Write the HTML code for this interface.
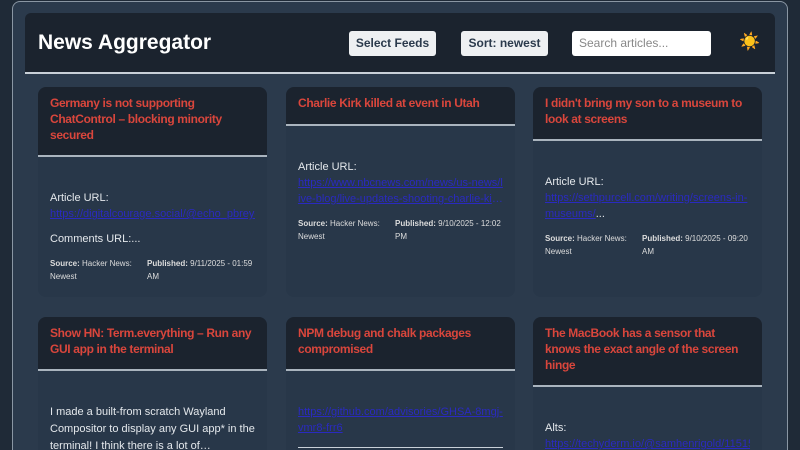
<!DOCTYPE html>
<html><head><meta charset="utf-8"><style>
*{box-sizing:border-box;margin:0;padding:0}
html,body{width:800px;height:450px;overflow:hidden}
body{background:#1f2a37;font-family:"Liberation Sans",sans-serif;position:relative}
.wrap{position:absolute;left:12px;top:1px;width:776px;height:449px;background:#2b3a4c;border:1px solid #8a96a3;border-bottom:none;border-radius:8px 8px 0 0}
.hdr{position:absolute;left:25px;top:13px;width:750px;height:61px;background:#1b232e;border-bottom:2px solid #c9d0d8;border-radius:6px 6px 0 0}
.hdr h1{position:absolute;left:13px;top:18px;color:#fff;font-size:21px;font-weight:bold}
.btn{position:absolute;top:18px;height:25px;background:#eef0f2;border-radius:3px;font-size:12px;font-weight:bold;color:#2b3a4c;text-align:center;line-height:25px}
.search{position:absolute;left:547px;top:18px;width:139px;height:25px;background:#fff;border-radius:3px;font-size:12px;color:#888;padding-left:7px;line-height:25px}
.sun{position:absolute;left:714px;top:19px;font-size:17px}
.card{position:absolute;width:229px;background:#283749;border-radius:8px 8px 0 0;overflow:hidden}
.ch{background:#1b232e;border-bottom:2px solid #aab4be;padding:8px 12px;color:#d9463c;font-size:12px;font-weight:bold;line-height:16px;letter-spacing:-0.35px}
.cb{padding:0 12px;color:#e4e8ec;font-size:11px;line-height:16px}
.cb a{color:#2a2ac0;text-decoration:underline;word-break:break-all}
.one{display:block;white-space:nowrap;overflow:hidden}
.two{display:-webkit-box;-webkit-line-clamp:2;-webkit-box-orient:vertical;overflow:hidden}
.meta{display:flex;font-size:8px;line-height:13px;margin-top:10px;color:#ddd}
.meta div:first-child{width:97px}
.meta div:last-child{flex:1}
</style></head><body>
<div class="wrap"></div>
<div class="hdr"><h1>News Aggregator</h1>
<div class="btn" style="left:324px;width:87px">Select Feeds</div>
<div class="btn" style="left:436px;width:87px">Sort: newest</div>
<div class="search">Search articles...</div>
<div class="sun">☀️</div></div>

<div class="card" style="left:38px;top:87px;height:210px;border-radius:8px"><div class="ch" style="height:70px">Germany is not supporting ChatControl – blocking minority secured</div>
<div class="cb"><div style="height:33px"></div>Article URL:<br><a class="one">https://digitalcourage.social/@echo_pbreyer/1</a><div style="margin-top:9px">Comments URL:...</div>
<div class="meta"><div><b>Source:</b> Hacker News: Newest</div><div><b>Published:</b> 9/11/2025 - 01:59 AM</div></div></div></div>

<div class="card" style="left:286px;top:87px;height:210px;border-radius:8px"><div class="ch" style="height:39px">Charlie Kirk killed at event in Utah</div>
<div class="cb"><div style="height:33px"></div>Article URL:<br><a class="two">https://www.nbcnews.com/news/us-news/live-blog/live-updates-shooting-charlie-kirk-event-utah</a>
<div class="meta"><div><b>Source:</b> Hacker News: Newest</div><div><b>Published:</b> 9/10/2025 - 12:02 PM</div></div></div></div>

<div class="card" style="left:533px;top:87px;height:210px;border-radius:8px"><div class="ch" style="height:54px">I didn't bring my son to a museum to look at screens</div>
<div class="cb"><div style="height:33px"></div>Article URL:<br><a>https://sethpurcell.com/writing/screens-in-museums/</a>...
<div class="meta"><div><b>Source:</b> Hacker News: Newest</div><div><b>Published:</b> 9/10/2025 - 09:20 AM</div></div></div></div>

<div class="card" style="left:38px;top:317px;height:133px"><div class="ch" style="height:54px">Show HN: Term.everything – Run any GUI app in the terminal</div>
<div class="cb" style="line-height:17px"><div style="height:33px"></div><div class="two" style="-webkit-line-clamp:3">I made a built-from scratch Wayland Compositor to display any GUI app* in the terminal! I think there is a lot of unexplored potential</div></div></div>

<div class="card" style="left:286px;top:317px;height:133px"><div class="ch" style="height:54px">NPM debug and chalk packages compromised</div>
<div class="cb"><div style="height:33px"></div><a>https://github.com/advisories/GHSA-8mgj-vmr8-frr6</a><div style="margin-top:11px;border-top:1px solid #c9d0d8"></div></div></div>

<div class="card" style="left:533px;top:317px;height:133px"><div class="ch" style="height:70px">The MacBook has a sensor that knows the exact angle of the screen hinge</div>
<div class="cb"><div style="height:33px"></div>Alts:<br><a class="one">https://techyderm.io/@samhenrigold/115159</a></div></div>
</body></html>
